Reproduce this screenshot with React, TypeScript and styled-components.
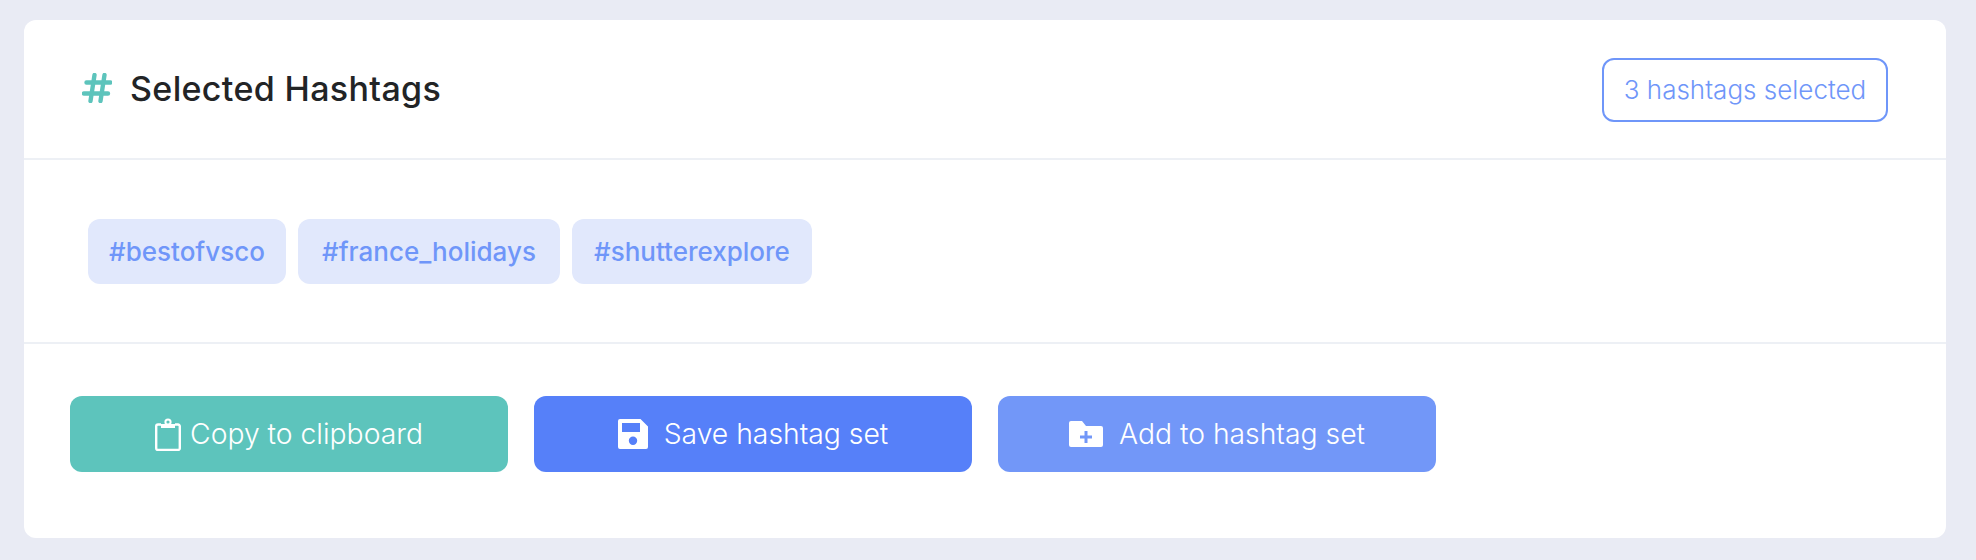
import React, { FC } from 'react';
import styled, { createGlobalStyle } from 'styled-components';

const GlobalStyle = createGlobalStyle`
  html, body {
    margin: 0;
    padding: 0;
    background: #e9ebf4;
  }
  * {
    box-sizing: border-box;
  }
`;

const Page = styled.div`
  width: 1976px;
  height: 560px;
  padding: 20px 30px 22px 24px;
  font-family: Inter, "Open Sans", sans-serif;
  overflow: hidden;
`;

const Card = styled.section`
  height: 518px;
  background: #fff;
  border-radius: 12px;
`;

const Header = styled.header`
  display: flex;
  align-items: center;
  justify-content: space-between;
  height: 140px;
  padding: 1px 58px 0 58px;
  border-bottom: 2px solid #edf0f5;
`;

const TitleGroup = styled.div`
  display: flex;
  align-items: center;
  gap: 18px;
  margin-bottom: 3px;
`;

const Title = styled.h2`
  margin: 0;
  font-size: 34px;
  font-weight: 450;
  letter-spacing: 0.35px;
  color: #222426;
`;

const CountBadge = styled.div`
  display: flex;
  align-items: center;
  justify-content: center;
  width: 286px;
  height: 64px;
  border: 2px solid #6f96f9;
  border-radius: 12px;
  font-size: 26px;
  font-weight: 300;
  color: #6f96f9;
`;

const TagList = styled.div`
  display: flex;
  gap: 12px;
  height: 184px;
  padding: 59px 0 0 64px;
  border-bottom: 2px solid #edf0f5;
`;

const Tag = styled.span<{ $width: number }>`
  display: flex;
  align-items: center;
  justify-content: center;
  width: ${({ $width }) => $width}px;
  height: 65px;
  background: #e1e8fc;
  border-radius: 12px;
  font-size: 26px;
  font-weight: 450;
  color: #6f96f9;
`;

const Actions = styled.div`
  display: flex;
  gap: 26px;
  padding: 52px 0 0 46px;
`;

const ActionButton = styled.button<{ $color: string; $gap: number }>`
  display: flex;
  align-items: center;
  justify-content: center;
  gap: ${({ $gap }) => $gap}px;
  width: 438px;
  height: 76px;
  border: 0;
  padding: 0;
  background: ${({ $color }) => $color};
  border-radius: 12px;
  font-family: inherit;
  font-size: 28.3px;
  font-weight: 300;
  color: #fff;
`;

const HashIcon = () => (
  <svg width="30" height="30" viewBox="0 0 30 30" fill="none" stroke="#5dc4bc" strokeWidth="4.4" strokeLinecap="round">
    <path d="M12.5 2 8.5 28M22.5 2l-4 26M4.5 9.5h24M2 20.5h24" />
  </svg>
);

const ClipboardIcon = () => (
  <svg width="26" height="33" viewBox="0 0 26 33" fill="none">
    <path
      d="M6 6.500H3a1.800 1.800 0 0 0-1.800 1.800v21.900A1.800 1.800 0 0 0 3 32h20a1.800 1.800 0 0 0 1.800-1.800V8.300a1.800 1.800 0 0 0-1.800-1.800h-3"
      stroke="#fff"
      strokeWidth="2.4"
    />
    <circle cx="13" cy="4" r="2.6" stroke="#fff" strokeWidth="2" />
    <path d="M6 6h14v4H6z" fill="#fff" />
  </svg>
);

const SaveIcon = () => (
  <svg width="30" height="30" viewBox="0 0 30 30">
    <path
      fillRule="evenodd"
      fill="#fff"
      d="M2 0h20.500L30 7.500V28a2 2 0 0 1-2 2H2a2 2 0 0 1-2-2V2a2 2 0 0 1 2-2Zm2 4v9h18V4H4Zm11 13.500a4.200 4.200 0 1 0 0 8.400 4.200 4.200 0 0 0 0-8.400Z"
    />
  </svg>
);

const FolderAddIcon = () => (
  <svg width="34" height="26" viewBox="0 0 34 26">
    <path
      fillRule="evenodd"
      fill="#fff"
      d="M2 0h11l4 5h15a2 2 0 0 1 2 2v17a2 2 0 0 1-2 2H2a2 2 0 0 1-2-2V2a2 2 0 0 1 2-2Zm13.500 10v4.500H11v3h4.500V22h3v-4.500H23v-3h-4.500V10h-3Z"
    />
  </svg>
);

const tags = [
  { label: '#bestofvsco', width: 198 },
  { label: '#france_holidays', width: 262 },
  { label: '#shutterexplore', width: 240 },
];

const App: FC = () => (
  <Page>
    <GlobalStyle />
    <Card>
      <Header>
        <TitleGroup>
          <HashIcon />
          <Title>Selected Hashtags</Title>
        </TitleGroup>
        <CountBadge>3 hashtags selected</CountBadge>
      </Header>
      <TagList>
        {tags.map((tag) => (
          <Tag key={tag.label} $width={tag.width}>
            {tag.label}
          </Tag>
        ))}
      </TagList>
      <Actions>
        <ActionButton $color="#5dc4bc" $gap={9}>
          <ClipboardIcon />
          Copy to clipboard
        </ActionButton>
        <ActionButton $color="#5680f9" $gap={16}>
          <SaveIcon />
          Save hashtag set
        </ActionButton>
        <ActionButton $color="#7297f8" $gap={16}>
          <FolderAddIcon />
          Add to hashtag set
        </ActionButton>
      </Actions>
    </Card>
  </Page>
);

export default App;
